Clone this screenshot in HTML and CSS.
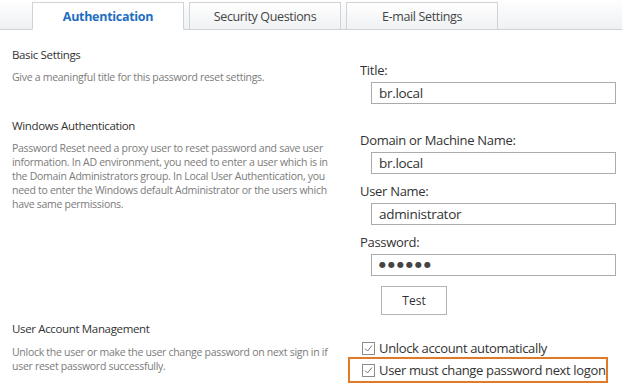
FILE: index.html
```html
<!DOCTYPE html>
<html>
<head>
<meta charset="utf-8">
<link rel="stylesheet" href="styles.css">
</head>
<body>
<div class="tabs">
  <div class="tab active">Authentication</div>
  <div class="tab">Security Questions</div>
  <div class="tab">E-mail Settings</div>
</div>
<div class="content">
  <div class="row row1">
    <div class="desc">
      <div class="heading">Basic Settings</div>
      <div class="text">Give a meaningful title for this password reset settings.</div>
    </div>
    <div class="fields">
      <div class="label">Title:</div>
      <div class="input">br.local</div>
    </div>
  </div>
  <div class="row row2">
    <div class="desc">
      <div class="heading">Windows Authentication</div>
      <div class="text">Password Reset need a proxy user to reset password and save user information. In AD environment, you need to enter a user which is in the Domain Administrators group. In Local User Authentication, you need to enter the Windows default Administrator or the users which have same permissions.</div>
    </div>
    <div class="fields">
      <div class="field">
        <div class="label">Domain or Machine Name:</div>
        <div class="input">br.local</div>
      </div>
      <div class="field">
        <div class="label">User Name:</div>
        <div class="input">administrator</div>
      </div>
      <div class="field">
        <div class="label">Password:</div>
        <div class="input dots">●●●●●●</div>
      </div>
      <div class="button">Test</div>
    </div>
  </div>
  <div class="row row3">
    <div class="desc">
      <div class="heading">User Account Management</div>
      <div class="text">Unlock the user or make the user change password on next sign in if user reset password successfully.</div>
    </div>
    <div class="fields">
      <div class="check">
        <svg class="cb" width="13" height="13" viewBox="0 0 13 13"><rect x="0.5" y="0.5" width="12" height="12" fill="#fff" stroke="#8c8c8c"/><path d="M3 6.5 L5.5 9 L10 3.5" fill="none" stroke="#7a7a7a" stroke-width="1"/></svg>
        <span>Unlock account automatically</span>
      </div>
      <div class="check highlight">
        <svg class="cb" width="13" height="13" viewBox="0 0 13 13"><rect x="0.5" y="0.5" width="12" height="12" fill="#fff" stroke="#8c8c8c"/><path d="M3 6.5 L5.5 9 L10 3.5" fill="none" stroke="#7a7a7a" stroke-width="1"/></svg>
        <span>User must change password next logon</span>
      </div>
    </div>
  </div>
</div>
</body>
</html>
```
FILE: styles.css
```css
* { box-sizing: border-box; }
html, body { margin: 0; padding: 0; background: #fff; }
body {
  font-family: "Open Sans", "Noto Sans", sans-serif;
  color: #333;
  width: 622px;
  height: 392px;
  overflow: hidden;
}
.tabs {
  height: 30px;
  display: flex;
  align-items: flex-end;
  gap: 5px;
  padding-left: 32px;
  background: linear-gradient(#ffffff, #eef0f2);
  border-bottom: 1px solid #cfd2d6;
}
.tab {
  width: 152px;
  height: 28px;
  margin-bottom: -1px;
  border: 1px solid #cfd2d6;
  background: linear-gradient(#ffffff, #eff1f3);
  display: flex;
  align-items: center;
  justify-content: center;
  padding-top: 1px;
  font-size: 12.5px;
  color: #444;
  letter-spacing: -0.35px;
}
.tab.active {
  background: #fff;
  border-bottom-color: #fff;
  color: #1e6fc2;
  font-weight: bold;
  font-size: 12.5px;
  letter-spacing: -0.3px;
}
.row { display: flex; }
.row1 { height: 82px; }
.row2 { height: 206px; }
.row3 { height: 74px; }
.desc { width: 348px; padding-left: 12px; padding-right: 10px; }
.fields { flex: 1; padding-left: 12px; }
.heading { font-size: 11.5px; line-height: 16px; color: #333; letter-spacing: -0.35px; }
.text { font-size: 10.5px; line-height: 14px; color: #7b7b7b; letter-spacing: -0.28px; }
.row1 .desc { padding-top: 17px; }
.row1 .text { margin-top: 7px; }
.row2 .desc { padding-top: 6px; }
.row2 .text { margin-top: 7px; }
.row3 .desc { padding-top: 3px; }
.row3 .text { margin-top: 8px; }
.label { font-size: 13px; line-height: 18px; color: #333; letter-spacing: -0.3px; }
.input {
  margin-left: 11px;
  margin-top: 3px;
  width: 245px;
  height: 22px;
  border: 1px solid #ababab;
  padding-left: 7px;
  font-size: 13.5px;
  line-height: 20px;
  color: #333;
  letter-spacing: -0.3px;
}
.input.dots {
  font-family: "DejaVu Sans", sans-serif;
  font-size: 8px;
  letter-spacing: 2px;
  color: #444;
}
.row1 .fields { padding-top: 31px; }
.row2 .fields { padding-top: 19px; }
.field { margin-bottom: 8px; }
.button {
  margin-left: 21px;
  margin-top: 10px;
  width: 66px;
  height: 29px;
  border: 1px solid #b4b4b4;
  display: flex;
  align-items: center;
  justify-content: center;
  font-size: 12px;
  color: #333;
}
.row3 .fields { padding-top: 19px; padding-left: 0; }
.check {
  display: flex;
  align-items: center;
  gap: 4px;
  height: 22px;
  padding-left: 14px;
  font-size: 13px;
  letter-spacing: -0.35px;
  color: #333;
  width: 260px;
  white-space: nowrap;
}
.check.highlight {
  border: 2px solid #e07a26;
  padding-left: 12px;
  height: 26px;
  margin-top: -2px;
}
.cb { flex: none; }
```
